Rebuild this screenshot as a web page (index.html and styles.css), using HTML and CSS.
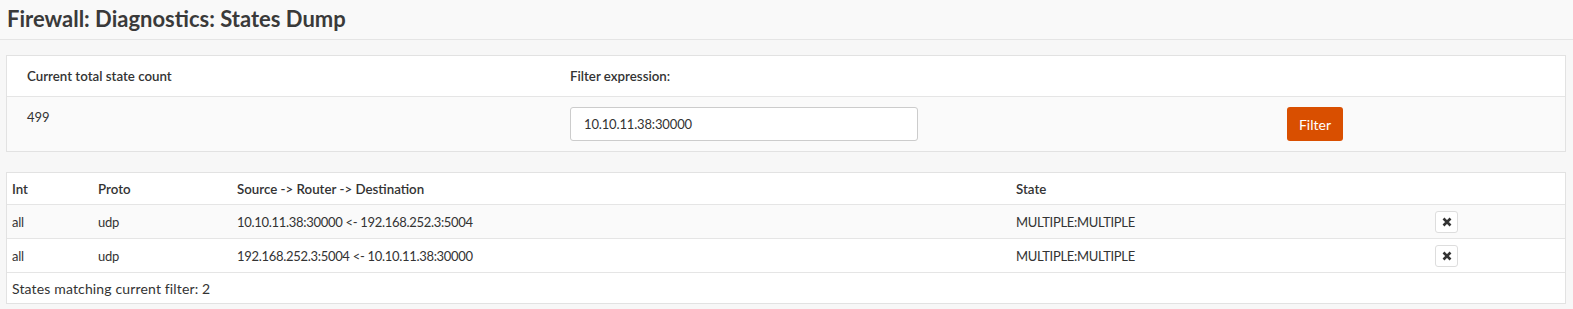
FILE: index.html
```html
<!DOCTYPE html>
<html>
    <head>
        <link rel="stylesheet" href="styles.css">
    </head>
    <body>
        <div class="page-head">
            <h1>Firewall: Diagnostics: States Dump</h1>
        </div>
        <div class="content">
            <div class="panel">
                <table class="filter-table">
                    <tr class="head">
                        <td class="c1">Current total state count</td>
                        <td class="c2">Filter expression:</td>
                        <td></td>
                    </tr>
                    <tr class="body">
                        <td class="c1 count">499</td>
                        <td class="c2"><input class="filter-input" type="text" value="10.10.11.38:30000"></td>
                        <td><button class="btn-filter">Filter</button></td>
                    </tr>
                </table>
            </div>
            <div class="panel">
                <table class="states">
                    <tr class="head">
                        <td class="int">Int</td>
                        <td class="proto">Proto</td>
                        <td class="src">Source -&gt; Router -&gt; Destination</td>
                        <td class="state">State</td>
                        <td></td>
                    </tr>
                    <tr class="row odd">
                        <td>all</td>
                        <td>udp</td>
                        <td>10.10.11.38:30000 &lt;- 192.168.252.3:5004</td>
                        <td>MULTIPLE:MULTIPLE</td>
                        <td><button class="btn-kill"><svg width="10" height="10" viewBox="0 0 10 10"><path d="M1.5 1.5 L8.5 8.5 M8.5 1.5 L1.5 8.5" stroke="#333" stroke-width="2.6"/></svg></button></td>
                    </tr>
                    <tr class="row">
                        <td>all</td>
                        <td>udp</td>
                        <td>192.168.252.3:5004 &lt;- 10.10.11.38:30000</td>
                        <td>MULTIPLE:MULTIPLE</td>
                        <td><button class="btn-kill"><svg width="10" height="10" viewBox="0 0 10 10"><path d="M1.5 1.5 L8.5 8.5 M8.5 1.5 L1.5 8.5" stroke="#333" stroke-width="2.6"/></svg></button></td>
                    </tr>
                    <tr class="foot">
                        <td colspan="5">States matching current filter: 2</td>
                    </tr>
                </table>
            </div>
        </div>
    </body>
</html>
```

FILE: styles.css
```css
body{
    margin:0;
    background-color:#f7f7f7;
    font-family:"Source Sans Pro", Lato, sans-serif;
    font-size:14px;
    color:#333;
}
.page-head{
    height:40px;
    background-color:#f9f9f9;
    border-bottom:1px solid #e5e5e5;
    box-sizing:border-box;
}
.page-head h1{
    margin:0;
    padding:5px 0 0 7px;
    font-size:22px;
    font-weight:bold;
    color:#3a3a3a;
}
.content{
    padding:15px 7px 0 6px;
}
.panel{
    background-color:#fff;
    border:1px solid #e2e2e2;
    margin-bottom:20px;
}
table{
    width:100%;
    border-collapse:collapse;
}
td{
    padding:0;
}
.head td{
    font-weight:600;
    font-size:13.3px;
}
.filter-table .head td{
    height:40px;
    border-bottom:1px solid #e5e5e5;
}
.filter-table .body td{
    height:54px;
    background-color:#fafafa;
}
.filter-table td:first-child{
    padding-left:20px;
    width:543px;
}
.filter-table .c2{
    width:717px;
}
.filter-table .body .count{
    vertical-align:top;
    padding-top:12px;
    height:42px;
    font-size:13px;
}
.filter-input{
    display:block;
    width:348px;
    height:34px;
    box-sizing:border-box;
    border:1px solid #ccc;
    border-radius:3px;
    padding:0 13px;
    font-family:"Source Sans Pro", Lato, sans-serif;
    font-size:13px;
    letter-spacing:-0.15px;
    color:#333;
}
.btn-filter{
    display:block;
    width:56px;
    height:34px;
    border:none;
    border-radius:3px;
    background-color:#d94f00;
    color:#fff;
    font-family:"Source Sans Pro", Lato, sans-serif;
    font-size:14px;
}
.states td{
    padding-left:5px;
    height:33px;
    border-top:1px solid #e5e5e5;
}
.states .row td{
    font-size:13px;
    letter-spacing:-0.3px;
}
.states .head td{
    height:31px;
    border-top:none;
}
.states .odd td{
    background-color:#fafafa;
}
.states .int{ width:81px; }
.states .proto{ width:134px; }
.states .src{ width:774px; }
.states .state{ width:414px; }
.states .foot td{
    height:30px;
    letter-spacing:0.15px;
}
.btn-kill{
    width:23px;
    height:22px;
    padding:0;
    background-color:#fff;
    border:1px solid #ddd;
    border-radius:3px;
    display:flex;
    align-items:center;
    justify-content:center;
}
```
